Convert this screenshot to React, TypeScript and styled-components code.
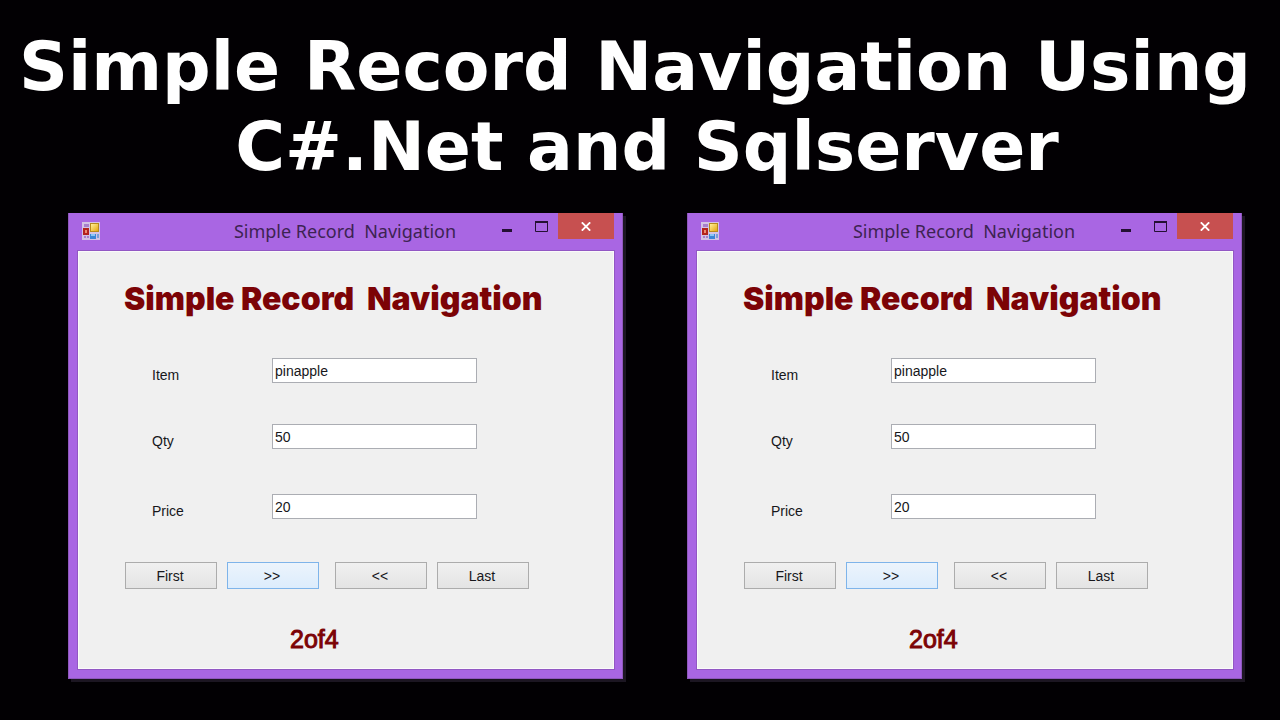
import React, { useId } from "react";
import styled, { createGlobalStyle } from "styled-components";

const GlobalStyle = createGlobalStyle`
  * {
    box-sizing: border-box;
  }
  body {
    margin: 0;
    background: #020003;
    font-family: "Liberation Sans", Arial, sans-serif;
  }
`;

const Page = styled.main`
  min-height: 100vh;
  padding: 27px 0;
`;

const Banner = styled.h1`
  margin: 0;
  padding-right: 10px;
  color: #ffffff;
  font: bold 68px/80px "DejaVu Sans", Verdana, sans-serif;
  text-align: center;
`;

const BannerLine = styled.span<{ $indent?: boolean }>`
  display: block;
  white-space: nowrap;
  padding-left: ${(p) => (p.$indent ? "24px" : "0")};
`;

const Windows = styled.div`
  display: grid;
  grid-template-columns: 1fr 1fr;
  gap: 64px;
  padding: 26px 38px 0 68px;
`;

const WindowFrame = styled.section`
  padding: 0 8px 9px 9px;
  background: #a966e3;
  border: 1px solid #8f58bd;
  border-top: 0;
  box-shadow: 3px 3px 0 #1c1622;
`;

const TitleBar = styled.header`
  display: flex;
  align-items: flex-start;
  height: 38px;
`;

const AppIcon = styled.svg`
  flex: none;
  width: 18px;
  height: 18px;
  margin: 9px 0 0 4px;
`;

const WindowTitle = styled.span`
  flex: 1;
  padding-left: 100px;
  color: #3d2352;
  font: 18px/36px "Noto Sans", "Open Sans", sans-serif;
  text-align: center;
  white-space: pre;
`;

const CaptionButton = styled.button<{ $close?: boolean }>`
  display: flex;
  align-items: center;
  justify-content: center;
  width: ${(p) => (p.$close ? "56px" : "34px")};
  height: 26px;
  padding: 0;
  border: 0;
  background: ${(p) => (p.$close ? "#c75050" : "transparent")};
`;

const Client = styled.form`
  padding: 27px 0 14px;
  background: #f0f0f0;
  border: 1px solid #fafafa;
  outline: 1px solid #9257c4;
`;

const Heading = styled.h2`
  margin: 0 0 39px;
  padding-left: 45px;
  color: #7c0306;
  font: 900 32px/40px Inter, "Liberation Sans", sans-serif;
  white-space: pre;
`;

const Fields = styled.div`
  display: grid;
  row-gap: 40px;
  padding-left: 73px;
`;

const Field = styled.div`
  display: grid;
  grid-template-columns: 120px 205px;

  &:last-child {
    padding-top: 4px;
  }
`;

const Label = styled.label`
  padding-top: 8px;
  color: #17171b;
  font-size: 14px;
  line-height: 18px;
`;

const TextBox = styled.input`
  height: 25px;
  padding: 0 2px;
  border: 1px solid #abadb3;
  border-radius: 0;
  background: #ffffff;
  color: #17171b;
  font: 14px/18px "Liberation Sans", Arial, sans-serif;
`;

const Toolbar = styled.div`
  display: flex;
  gap: 16px;
  padding: 42px 0 0 46px;
`;

const ButtonPair = styled.div`
  display: flex;
  gap: 10px;
`;

const NavButton = styled.button<{ $active?: boolean }>`
  width: 92px;
  height: 27px;
  padding: 0 2px 0 0;
  border: 1px solid ${(p) => (p.$active ? "#7eb4ea" : "#acacac")};
  background: ${(p) =>
    p.$active
      ? "linear-gradient(#ecf4fc, #dcecfc)"
      : "linear-gradient(#f0f0f0, #e4e4e4)"};
  color: #17171b;
  font: 14px/18px "Liberation Sans", Arial, sans-serif;
`;

const Position = styled.output`
  display: block;
  margin-top: 35px;
  padding-left: 211px;
  color: #7c0306;
  font-size: 25px;
  line-height: 30px;
  -webkit-text-stroke: 1px #7c0306;
`;

const fields = [
  { name: "Item", value: "pinapple" },
  { name: "Qty", value: "50" },
  { name: "Price", value: "20" },
];

function FormsIcon() {
  return (
    <AppIcon viewBox="0 0 18 18" aria-hidden="true">
      <defs>
        <linearGradient id="gold" x1="0" y1="0" x2="1" y2="1">
          <stop offset="0" stopColor="#fff09a" />
          <stop offset="1" stopColor="#e5a812" />
        </linearGradient>
      </defs>
      <rect width="18" height="18" fill="#d3c3e6" />
      <rect x="2" y="2" width="5" height="3" fill="#a87fcc" />
      <rect x="1" y="6" width="6" height="7" fill="#b3231f" />
      <rect x="3" y="8" width="2" height="3" fill="#ec8a70" />
      <rect x="8" y="1" width="9" height="9" fill="#b78a1c" />
      <rect x="9" y="2" width="7" height="7" fill="url(#gold)" />
      <rect x="2" y="14" width="2" height="2" fill="#a87fcc" />
      <rect x="5" y="14" width="2" height="2" fill="#a87fcc" />
      <rect x="8" y="12" width="6" height="5" fill="#3d86d6" />
      <rect x="9" y="12" width="4" height="2" fill="#8cc6f5" />
      <rect x="15" y="12" width="2" height="4" fill="#7c9fd8" />
    </AppIcon>
  );
}

function RecordWindow() {
  const id = useId();
  return (
    <WindowFrame>
      <TitleBar>
        <FormsIcon />
        <WindowTitle>{"Simple Record  Navigation"}</WindowTitle>
        <CaptionButton type="button" aria-label="Minimize">
          <svg width="10" height="13" viewBox="0 0 10 13">
            <path d="M0 10.5h10" stroke="#241033" strokeWidth="3" />
          </svg>
        </CaptionButton>
        <CaptionButton type="button" aria-label="Maximize">
          <svg width="13" height="11" viewBox="0 0 13 11">
            <path d="M.5 1v9.5h12V1" fill="none" stroke="#241033" />
            <path d="M0 1h13" stroke="#241033" strokeWidth="2" />
          </svg>
        </CaptionButton>
        <CaptionButton type="button" $close aria-label="Close">
          <svg width="10" height="9" viewBox="0 0 10 9">
            <path d="M.8.3l8.4 8.4M9.2.3L.8 8.7" stroke="#fff" strokeWidth="1.8" />
          </svg>
        </CaptionButton>
      </TitleBar>
      <Client onSubmit={(e) => e.preventDefault()}>
        <Heading>{"Simple Record  Navigation"}</Heading>
        <Fields>
          {fields.map((f) => (
            <Field key={f.name}>
              <Label htmlFor={id + f.name}>{f.name}</Label>
              <TextBox id={id + f.name} defaultValue={f.value} />
            </Field>
          ))}
        </Fields>
        <Toolbar>
          <ButtonPair>
            <NavButton type="button">First</NavButton>
            <NavButton type="button" $active>
              &gt;&gt;
            </NavButton>
          </ButtonPair>
          <ButtonPair>
            <NavButton type="button">&lt;&lt;</NavButton>
            <NavButton type="button">Last</NavButton>
          </ButtonPair>
        </Toolbar>
        <Position>2of4</Position>
      </Client>
    </WindowFrame>
  );
}

export default function App() {
  return (
    <>
      <GlobalStyle />
      <Page>
        <Banner>
          <BannerLine>Simple Record Navigation Using</BannerLine>
          <BannerLine $indent>C#.Net and Sqlserver</BannerLine>
        </Banner>
        <Windows>
          <RecordWindow />
          <RecordWindow />
        </Windows>
      </Page>
    </>
  );
}
